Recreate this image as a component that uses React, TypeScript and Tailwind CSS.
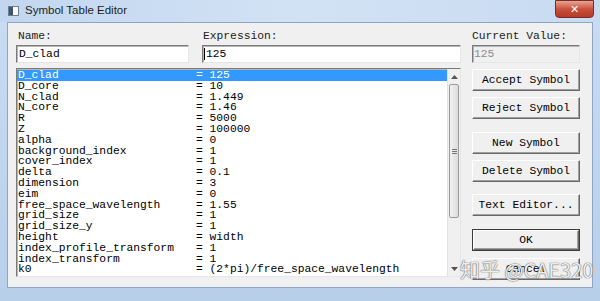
import React from "react";

const rows: [string, string][] = [
  ["D_clad", "125"],
  ["D_core", "10"],
  ["N_clad", "1.449"],
  ["N_core", "1.46"],
  ["R", "5000"],
  ["Z", "100000"],
  ["alpha", "0"],
  ["background_index", "1"],
  ["cover_index", "1"],
  ["delta", "0.1"],
  ["dimension", "3"],
  ["eim", "0"],
  ["free_space_wavelength", "1.55"],
  ["grid_size", "1"],
  ["grid_size_y", "1"],
  ["height", "width"],
  ["index_profile_transform", "1"],
  ["index_transform", "1"],
  ["k0", "(2*pi)/free_space_wavelength"],
];

const mono = "font-['Liberation_Mono',monospace] text-[11.3px]";

// classic raised 3d push button
const Btn = ({ label, def, className }: { label: string; def?: boolean; className?: string }) => (
  <div className={`${def ? "border border-[#3c3c3c]" : ""} ${className ?? ""}`}>
    <div
      className={`flex items-center justify-center bg-[#f0f0f0] border-t border-l border-t-white border-l-white border-b border-r border-b-[#696969] border-r-[#696969] shadow-[inset_-1px_-1px_0_#a0a0a0] ${def ? "h-[20px]" : "h-[22px]"} ${mono} text-black`}
    >
      {label}
    </div>
  </div>
);

const sunken =
  "border-t border-l border-t-[#7a7a7a] border-l-[#7a7a7a] border-b border-r border-b-[#e6e6e6] border-r-[#e6e6e6] shadow-[inset_1px_1px_0_#b5b5b5]";

export default function App() {
  return (
    <div className="relative w-[600px] h-[301px] overflow-hidden bg-gradient-to-b from-[#c9dcf2] to-[#b8cfea]">
      {/* title bar */}
      <div className="h-[22px] flex items-center bg-gradient-to-r from-[#c2d7ef] via-[#d2e2f5] to-[#c8dbf1]">
        <div className="ml-[8px] w-[11px] h-[10px] border border-[#6d7d92] bg-white flex">
          <div className="w-[4px] h-full bg-[#3f5573]" />
        </div>
        <span className="ml-[6px] font-['Liberation_Sans',sans-serif] text-[11.5px] text-[#1e1e1e]">
          Symbol Table Editor
        </span>
        <div className="ml-auto mr-[6px] self-start w-[39px] h-[18px] rounded-b-[4px] border border-[#7b2a2a] bg-gradient-to-b from-[#e8a493] via-[#c9503d] to-[#b53a28] flex items-center justify-center">
          <span className="font-['DejaVu_Sans',sans-serif] text-[11px] font-bold text-white leading-none">✕</span>
        </div>
      </div>

      {/* client area */}
      <div className="mx-[7px] h-[266px] bg-[#f0f0f0] border border-[#8fa6c2] pt-[7px] pl-[8px] flex gap-[11px]">
        {/* left column */}
        <div className="w-[445px] flex flex-col">
          <div className="flex gap-[13px]">
            <div className="w-[173px] flex flex-col">
              <span className={`${mono} leading-[13px] pl-[2px] text-[#222]`}>Name:</span>
              <div className={`mt-[2px] h-[18px] bg-white ${sunken} flex items-center pl-[2px] ${mono} text-black`}>
                D_clad
              </div>
            </div>
            <div className="w-[259px] flex flex-col">
              <span className={`${mono} leading-[13px] pl-[1px] text-[#222]`}>Expression:</span>
              <div className={`mt-[2px] h-[18px] bg-white ${sunken} flex items-center pl-[1px] ${mono} text-black`}>
                <span className="w-px h-[12px] bg-black mr-[1px]" />
                125
              </div>
            </div>
          </div>

          {/* list box */}
          <div className={`mt-[5px] h-[209px] bg-white ${sunken} flex`}>
            <div className="flex-1 flex flex-col pt-px">
              {rows.map(([name, value], i) => (
                <div
                  key={name}
                  className={`flex h-[10.8px] leading-[10.8px] ${mono} ${i === 0 ? "bg-[#3399ff] text-white" : "text-black"}`}
                >
                  <span className="w-[179px] pl-[1px] whitespace-pre">{name}</span>
                  <span className="whitespace-pre">= {value}</span>
                </div>
              ))}
            </div>
            {/* scrollbar */}
            <div className="w-[13px] flex flex-col bg-[#f0f0f0] border-l border-[#e2e2e2] pt-px pb-px">
              <div className="h-[13px] flex items-center justify-center">
                <svg width="7" height="4" viewBox="0 0 7 4">
                  <path d="M0 4 L3.5 0 L7 4 Z" fill="#555" />
                </svg>
              </div>
              <div className="mx-px mt-px h-[134px] rounded-[2px] border border-[#9b9b9b] bg-gradient-to-r from-[#f2f2f2] to-[#dcdcdc] flex items-center justify-center">
                <div className="flex flex-col gap-[1px]">
                  <div className="w-[5px] h-px bg-[#777]" />
                  <div className="w-[5px] h-px bg-[#777]" />
                  <div className="w-[5px] h-px bg-[#777]" />
                </div>
              </div>
              <div className="flex-1" />
              <div className="h-[13px] flex items-center justify-center">
                <svg width="7" height="4" viewBox="0 0 7 4">
                  <path d="M0 0 L3.5 4 L7 0 Z" fill="#555" />
                </svg>
              </div>
            </div>
          </div>
        </div>

        {/* right column */}
        <div className="w-[108px] flex flex-col">
          <span className={`${mono} leading-[13px] text-[#222]`}>Current Value:</span>
          <div className={`mt-[2px] h-[18px] bg-[#f0f0f0] ${sunken} flex items-center pl-[1px] ${mono} text-[#8c8c8c]`}>
            125
          </div>
          <Btn label="Accept Symbol" className="mt-[6px]" />
          <Btn label="Reject Symbol" className="mt-[6px]" />
          <Btn label="New Symbol" className="mt-[13px]" />
          <Btn label="Delete Symbol" className="mt-[6px]" />
          <Btn label="Text Editor..." className="mt-[12px]" />
          <Btn label="OK" def className="mt-[13px]" />
          <Btn label="Cancel" className="mt-[7px]" />
        </div>
      </div>

      {/* watermark */}
      <div className="absolute left-[460px] top-[257px] whitespace-nowrap font-['Noto_Sans_CJK_SC','Noto_Sans',sans-serif] text-[20px] leading-[26px] text-white/90 [text-shadow:0_0_1px_#555,0_0_1px_#555]">
        知乎 @CAE320
      </div>
    </div>
  );
}
